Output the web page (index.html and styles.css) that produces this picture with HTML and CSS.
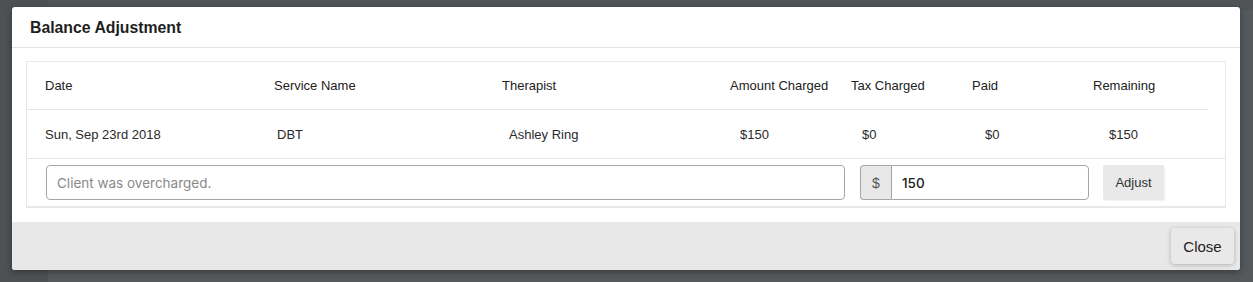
FILE: index.html
```html
<!DOCTYPE html>
<html lang="en">
<head>
    <meta charset="UTF-8">
    <title>Balance Adjustment</title>
    <link rel="stylesheet" href="styles.css">
</head>
<body>

    <!-- Balance adjustment modal -->
    <div class="modal">
        <div class="modal-header">
            <h4>Balance Adjustment</h4>
        </div>

        <div class="modal-body">
            <div class="adjust-panel">
                <table class="ledger">
                    <thead>
                        <tr>
                            <th>Date</th>
                            <th>Service Name</th>
                            <th>Therapist</th>
                            <th>Amount Charged</th>
                            <th>Tax Charged</th>
                            <th>Paid</th>
                            <th>Remaining</th>
                        </tr>
                    </thead>
                    <tbody>
                        <tr>
                            <td>Sun, Sep 23rd 2018</td>
                            <td>DBT</td>
                            <td>Ashley Ring</td>
                            <td>$150</td>
                            <td>$0</td>
                            <td>$0</td>
                            <td>$150</td>
                        </tr>
                    </tbody>
                </table>

                <div class="adjust-row">
                    <input class="note-input" type="text" placeholder="Client was overcharged.">
                    <div class="amount-group">
                        <span class="addon">$</span>
                        <input class="amount-input" type="text" value="150">
                    </div>
                    <button class="btn-adjust">Adjust</button>
                </div>
            </div>
        </div>

        <div class="modal-footer">
            <button class="btn-close">Close</button>
        </div>
    </div>

</body>
</html>
```

FILE: styles.css
```css
body {
    margin: 0;
    padding: 0;
    height: 282px;
    overflow: hidden;
    font-family: 'Liberation Sans', Arial, sans-serif;
    color: #333;
    background:
        linear-gradient(to right, #4e5153 0, #4e5153 48px, transparent 48px),
        linear-gradient(to bottom, #515456 0, #515456 10px, transparent 10px),
        #56595b;
}

/* Modal box */
.modal {
    margin: 7px 13px 0 12px;
    background-color: #fff;
    border-radius: 3px;
    box-shadow: 0 2px 6px rgba(0, 0, 0, 0.35);
    overflow: hidden;
}

.modal-header {
    height: 40px;
    border-bottom: 1px solid #e3e3e3;
    display: flex;
    align-items: center;
    padding-left: 18px;
}

.modal-header h4 {
    margin: 0;
    font-size: 15.8px;
    font-weight: bold;
    color: #1e1e1e;
    padding-top: 1px;
}

.modal-body {
    padding: 13px 14px 14px 14px;
}

.adjust-panel {
    border: 1px solid #e8e8e8;
    border-bottom-width: 2px;
}

/* Table of charges */
.ledger {
    border-collapse: collapse;
    table-layout: fixed;
    width: 1181px;
    font-size: 13px;
    color: #222;
}

.ledger th,
.ledger td {
    text-align: left;
    font-weight: normal;
    padding: 0;
    vertical-align: middle;
    white-space: nowrap;
}

.ledger th {
    height: 47px;
    border-bottom: 1px solid #e6e6e6;
}

.ledger td {
    height: 48px;
    color: #2a2a2a;
}

.ledger th:nth-child(1),
.ledger td:nth-child(1) {
    padding-left: 18px;
}

.ledger th:nth-child(1) { width: 229px; }
.ledger th:nth-child(2),
.ledger th:nth-child(3) { width: 228px; }
.ledger th:nth-child(4),
.ledger th:nth-child(5),
.ledger th:nth-child(6) { width: 121px; }

.ledger td:nth-child(2) { padding-left: 3px; }
.ledger td:nth-child(3) { padding-left: 7px; }
.ledger td:nth-child(4) { padding-left: 10px; }
.ledger td:nth-child(5) { padding-left: 11px; }
.ledger td:nth-child(6) { padding-left: 13px; }
.ledger td:nth-child(7) { padding-left: 16px; }

/* Adjustment form row */
.adjust-row {
    border-top: 1px solid #e6e6e6;
    display: flex;
    align-items: center;
    padding: 6px 0 6px 19px;
    height: 35px;
}

.note-input,
.amount-input {
    box-sizing: border-box;
    height: 35px;
    border: 1px solid #a6a6a6;
    font-family: Inter, 'Open Sans', sans-serif;
    font-size: 13.5px;
    color: #222;
    outline: none;
}

.note-input {
    width: 799px;
    border-radius: 4px;
    padding: 0 10px;
}

.note-input::placeholder {
    color: #8a8a8a;
}

.amount-group {
    display: flex;
    margin-left: 15px;
    width: 229px;
}

.addon {
    box-sizing: border-box;
    width: 31px;
    height: 35px;
    display: flex;
    align-items: center;
    justify-content: center;
    background-color: #e8e8e8;
    border: 1px solid #a6a6a6;
    border-right: none;
    border-radius: 4px 0 0 4px;
    font-size: 14px;
    color: #555;
}

.amount-input {
    flex: 1;
    min-width: 0;
    border-radius: 0 4px 4px 0;
    padding: 0 10px;
    font-weight: 500;
}

.btn-adjust {
    margin-left: 14px;
    width: 61px;
    height: 35px;
    border: none;
    border-radius: 2px;
    background-color: #e9e9e9;
    box-shadow: 1px 1px 2px rgba(0, 0, 0, 0.06);
    font-family: 'Liberation Sans', Arial, sans-serif;
    font-size: 13px;
    color: #333;
}

/* Footer */
.modal-footer {
    background-color: #e8e8e8;
    height: 48px;
    display: flex;
    align-items: center;
    justify-content: flex-end;
    padding-right: 6px;
}

.btn-close {
    width: 63px;
    height: 36px;
    border: none;
    border-radius: 4px;
    background-color: #e9e9e9;
    box-shadow: 0 1px 4px rgba(0, 0, 0, 0.25);
    font-family: 'Liberation Sans', Arial, sans-serif;
    font-size: 15px;
    color: #222;
}
```
